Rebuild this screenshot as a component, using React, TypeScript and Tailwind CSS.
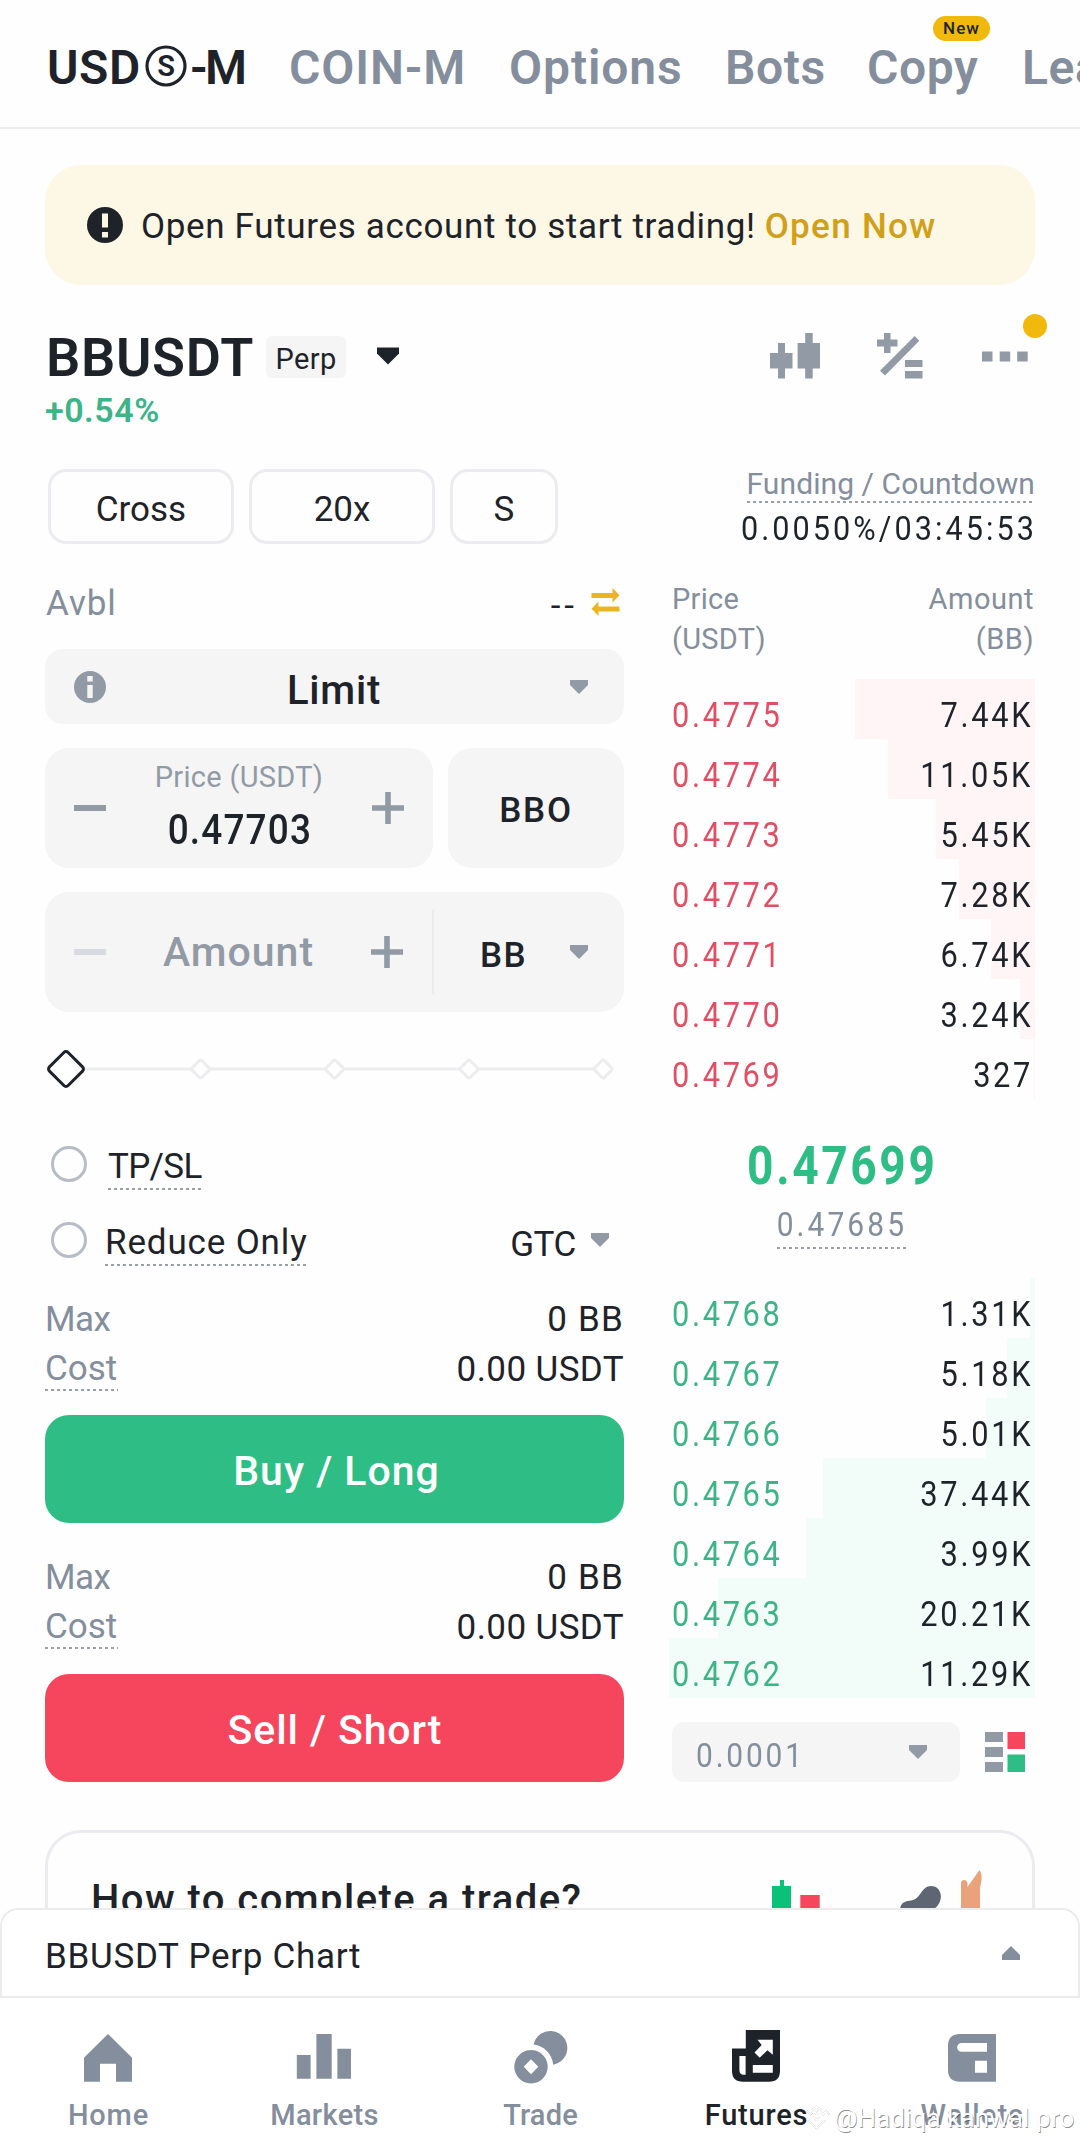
import React from "react";

type Level = { price: string; amount: string; depth: number };

const ASKS: Level[] = [
  { price: "0.4775", amount: "7.44K", depth: 180 },
  { price: "0.4774", amount: "11.05K", depth: 147 },
  { price: "0.4773", amount: "5.45K", depth: 99 },
  { price: "0.4772", amount: "7.28K", depth: 76 },
  { price: "0.4771", amount: "6.74K", depth: 44 },
  { price: "0.4770", amount: "3.24K", depth: 15 },
  { price: "0.4769", amount: "327", depth: 1 },
];

const BIDS: Level[] = [
  { price: "0.4768", amount: "1.31K", depth: 5 },
  { price: "0.4767", amount: "5.18K", depth: 28 },
  { price: "0.4766", amount: "5.01K", depth: 49 },
  { price: "0.4765", amount: "37.44K", depth: 212 },
  { price: "0.4764", amount: "3.99K", depth: 229 },
  { price: "0.4763", amount: "20.21K", depth: 317 },
  { price: "0.4762", amount: "11.29K", depth: 366 },
];

function Caret({ className = "" }: { className?: string }) {
  return (
    <svg viewBox="0 0 18 14" className={className} fill="currentColor">
      <path d="M0 0H18V5L9 14L0 5Z" />
    </svg>
  );
}

function Header() {
  return (
    <header className="grid h-[129px] shrink-0 grid-cols-[242px_220px_216px_142px_155px_auto] items-center overflow-hidden border-b-2 border-[#ededed] pt-[8px] pl-[47px] text-[48px] font-semibold leading-[60px] whitespace-nowrap text-[#848e9c]">
      <div className="flex items-center text-[#1e2329]">
        <span className="tracking-[0.6px]">USD</span>
        <svg viewBox="0 0 42 42" className="mb-[3px] ml-[4px] h-[42px] w-[42px]">
          <circle cx="21" cy="21" r="19" fill="none" stroke="currentColor" strokeWidth="3.2" />
          <text x="21" y="31.200" textAnchor="middle" fontSize="29" fontWeight="600" fill="currentColor">S</text>
        </svg>
        <span className="ml-[3px] tracking-[-2.6px]">-M</span>
      </div>
      <span className="tracking-[0.9px]">COIN-M</span>
      <span className="tracking-[0.9px]">Options</span>
      <span className="tracking-[0.6px]">Bots</span>
      <span className="relative tracking-[0.6px]">
        Copy
        <span className="absolute top-[-22px] left-[66px] flex h-[25px] w-[57px] items-center justify-center rounded-full bg-[#f0b90b] text-[17px] leading-none font-medium tracking-[1px] text-[#1e2329]">
          New
        </span>
      </span>
      <span className="tracking-[0.6px]">Lea</span>
    </header>
  );
}

function Banner() {
  return (
    <div className="mt-[36px] flex h-[120px] items-center rounded-[36px] bg-[#fdf7e6] pl-[42px] text-[35px] whitespace-nowrap">
      <svg viewBox="0 0 36 36" className="h-[36px] w-[36px]">
        <circle cx="18" cy="18" r="18" fill="#1e2329" />
        <path d="M15 6.500h6v14h-6zM15 25h6v5.500h-6z" fill="#fdf7e6" />
      </svg>
      <span className="ml-[18px] pt-[5px] tracking-[0.66px]">Open Futures account to start trading!</span>
      <span className="ml-[9px] pt-[5px] font-medium tracking-[1.3px] text-[#d0a01a]">Open Now</span>
    </div>
  );
}

function PairTitle() {
  return (
    <div className="mt-[42px] flex h-[106px] items-start justify-between">
      <div>
        <div className="flex h-[60px] items-center pl-[1px]">
          <span className="pt-[2px] text-[54px] leading-[60px] font-semibold tracking-[0.7px]">BBUSDT</span>
          <span className="ml-[12px] flex h-[42px] w-[80px] items-center justify-center rounded-[6px] bg-[#f5f5f5] pt-[5px] text-[29px] leading-none tracking-[0.4px]">
            Perp
          </span>
          <Caret className="mb-[3px] ml-[31px] h-[18px] w-[22px]" />
        </div>
        <div className="text-[34px] leading-[47px] font-semibold tracking-[0.5px] text-[#3bb588]">+0.54%</div>
      </div>
      <div className="relative flex h-[58px] items-center text-[#929aa5]">
        <svg viewBox="0 0 50 46" className="h-[46px] w-[50px]" fill="currentColor">
          <path d="M8 10h7v10h7.500v15.500H15v10H8v-10H0V20h8z" />
          <path d="M35.200 0h7.500v10H50v25.500h-7.300v10h-7.500v-10H27.600V10h7.600z" />
        </svg>
        <svg viewBox="0 0 46 46" className="ml-[57px] h-[46px] w-[46px]" fill="currentColor">
          <path d="M7 0h6.500v6.500H20.500v7H13.500V20H7v-6.500H0v-7h7z" />
          <path d="M37.700 3L42.300 7.700L8 42.500L3 37.700z" />
          <path d="M28 27h17.500v7H28zM28 38h17.500v7.500H28z" />
        </svg>
        <svg viewBox="0 0 46 11" className="mr-[7px] ml-[59px] h-[11px] w-[46px]" fill="currentColor">
          <path d="M0 0.500h10.500v10H0zM17.700 0.500h10.500v10H17.700zM35.200 0.500h10.500v10H35.200z" />
        </svg>
        <span className="absolute top-[-13px] right-[-12px] h-[24px] w-[24px] rounded-full bg-[#f0b90b]" />
      </div>
    </div>
  );
}

/** Label with the dotted rule that marks an explainable term. */
function Dotted({ children, className = "" }: { children: React.ReactNode; className?: string }) {
  return (
    <span className={"inline-flex flex-col " + className}>
      <span className="translate-y-px">{children}</span>
      <span className="h-[2px] w-full bg-[repeating-linear-gradient(90deg,#9aa0a6_0_3px,transparent_3px_6px)]" />
    </span>
  );
}

function MarginRow() {
  return (
    <div className="mt-[36px] flex h-[84px] items-start justify-between whitespace-nowrap">
      <div className="flex pl-[3px] text-[35px]">
        <div className="flex h-[75px] w-[186px] items-center justify-center rounded-[18px] border-[3px] border-[#ececf0] pt-[8px]">Cross</div>
        <div className="ml-[15px] flex h-[75px] w-[186px] items-center justify-center rounded-[18px] border-[3px] border-[#ececf0] pt-[8px]">20x</div>
        <div className="ml-[15px] flex h-[75px] w-[108px] items-center justify-center rounded-[18px] border-[3px] border-[#ececf0] pt-[8px]">S</div>
      </div>
      <div className="flex flex-col items-end">
        <Dotted className="gap-[4px] text-[30px] leading-[28px] tracking-[0.08px] text-[#848e9c]">Funding / Countdown</Dotted>
        <span className="mr-[-2px] origin-right scale-x-90 text-[34px] leading-[51px] tracking-[3.4px]">0.0050%/03:45:53</span>
      </div>
    </div>
  );
}

function Minus({ className = "" }: { className?: string }) {
  return <span className={"h-[6px] w-[32px] " + className} />;
}

function Plus() {
  return (
    <svg viewBox="0 0 32 32" className="h-[32px] w-[32px] text-[#929aa5]" fill="currentColor">
      <path d="M13.200 0h5.600v13.200H32v5.600H18.800V32h-5.600V18.800H0v-5.600h13.200z" />
    </svg>
  );
}

function Slider() {
  return (
    <svg viewBox="0 0 579 40" className="mt-[37px] h-[40px] w-[579px]" fill="#fff">
      <path d="M21 20H558" stroke="#ededf0" strokeWidth="3" />
      {[155.6, 289.6, 424, 558.2].map((x) => (
        <rect key={x} x={x - 6.8} y="13.200" width="13.600" height="13.600" rx="2" stroke="#ededf0" strokeWidth="3" transform={`rotate(45 ${x} 20)`} />
      ))}
      <rect x="7.800" y="6.800" width="26.400" height="26.400" rx="3" stroke="#1e2329" strokeWidth="3" transform="rotate(45 21 20)" />
    </svg>
  );
}

function Radio() {
  return <span className="mt-[2px] ml-[6px] h-[36px] w-[36px] rounded-full border-[3px] border-[#b7bdc6]" />;
}

function Totals() {
  return (
    <div className="text-[35px]">
      <div className="flex h-[50px] items-center justify-between pt-[4px]">
        <span className="tracking-[-0.5px] text-[#848e9c]">Max</span>
        <span className="tracking-[1.2px]">0 BB</span>
      </div>
      <div className="flex h-[50px] items-start justify-between">
        <Dotted className="mt-[4px] w-[73px] leading-[42px] text-[#848e9c]">Cost</Dotted>
        <span className="leading-[53px] tracking-[0.4px]">0.00 USDT</span>
      </div>
    </div>
  );
}

function OrderForm() {
  return (
    <section className="w-[579px] whitespace-nowrap">
      <div className="mt-[26px] flex h-[50px] items-center justify-between text-[35px]">
        <span className="pl-[1px] tracking-[0.9px] text-[#848e9c]">Avbl</span>
        <div className="flex items-center pr-[4px]">
          <span className="pt-[4px] tracking-[4px]">--</span>
          <svg viewBox="0 0 29 28" className="mb-[5px] ml-[13px] h-[28px] w-[29px] text-[#ebb61d]" fill="currentColor">
            <path d="M0.500 5h21V0l7 7.200l-7 7.300V10h-21z" />
            <path d="M28.500 18.500H7.500V13.500l-7 7.200l7 7.300v-4.500h21z" />
          </svg>
        </div>
      </div>

      <div className="mt-[20px] flex h-[75px] items-center justify-between rounded-[18px] bg-[#f5f5f5] pr-[36px] pl-[29px] text-[40px] font-medium">
        <svg viewBox="0 0 32 32" className="h-[32px] w-[32px]">
          <circle cx="16" cy="16" r="16" fill="#929aa5" />
          <path d="M13.300 5h5.400v5.500h-5.400zM13.300 14h5.400v13h-5.400z" fill="#f5f5f5" />
        </svg>
        <span className="pt-[8px] pr-[8px] tracking-[0.8px]">Limit</span>
        <Caret className="h-[14px] w-[18px] text-[#929aa5]" />
      </div>

      <div className="mt-[24px] flex gap-[15px]">
        <div className="flex h-[120px] w-[388px] items-center justify-between rounded-[24px] bg-[#f5f5f5] px-[29px]">
          <Minus className="bg-[#929aa5]" />
          <div className="flex flex-col items-center">
            <span className="text-[29px] leading-[42px] tracking-[0.3px] text-[#929aa5]">Price (USDT)</span>
            <span className="scale-x-[0.88] pl-[2px] text-[42px] leading-[63px] font-medium tracking-[1.3px]">0.47703</span>
          </div>
          <Plus />
        </div>
        <div className="flex h-[120px] w-[176px] items-center justify-center rounded-[24px] bg-[#f5f5f5] pt-[6px] text-[35px] font-medium tracking-[1.8px]">BBO</div>
      </div>

      <div className="mt-[24px] flex h-[120px] items-center rounded-[24px] bg-[#f5f5f5]">
        <div className="flex w-[387px] items-center justify-between px-[29px]">
          <Minus className="bg-[#d8dbdf]" />
          <span className="pt-[2px] text-[41px] font-medium tracking-[1px] text-[#929aa5]">Amount</span>
          <Plus />
        </div>
        <div className="h-[84px] w-[2px] bg-[#ebebee]" />
        <div className="flex flex-1 items-center justify-between pr-[36px] pl-[46px]">
          <span className="pt-[8px] text-[35px] font-medium tracking-[1.5px]">BB</span>
          <Caret className="h-[14px] w-[18px] text-[#929aa5]" />
        </div>
      </div>

      <Slider />

      <div className="mt-[55px] flex h-[46px] items-start text-[35px]">
        <Radio />
        <Dotted className="ml-[21px] leading-[44px] tracking-[-0.7px]">TP/SL</Dotted>
      </div>
      <div className="mt-[30px] flex h-[46px] items-start text-[35px]">
        <Radio />
        <Dotted className="ml-[18px] leading-[44px] tracking-[0.85px]">Reduce Only</Dotted>
        <div className="ml-auto flex items-center pr-[15px]">
          <span className="leading-[49px] tracking-[-0.4px]">GTC</span>
          <Caret className="mb-[9px] ml-[15px] h-[14px] w-[18px] text-[#929aa5]" />
        </div>
      </div>

      <div className="mt-[27px]">
        <Totals />
      </div>
      <button className="mt-[22px] block h-[108px] w-full rounded-[24px] bg-[#2ebd85] pt-[6px] pl-[4px] text-[41px] font-medium tracking-[1px] text-white">Buy / Long</button>
      <div className="mt-[28px]">
        <Totals />
      </div>
      <button className="mt-[23px] block h-[108px] w-full rounded-[24px] bg-[#f6465d] pt-[5px] pl-[1px] text-[41px] font-medium tracking-[0.9px] text-white">Sell / Short</button>
    </section>
  );
}

function Depth({ levels, priceClass, barClass }: { levels: Level[]; priceClass: string; barClass: string }) {
  return (
    <div>
      {levels.map((l) => (
        <div key={l.price} className="relative flex h-[60px] items-center justify-between pt-[14px] pr-[2px] pl-[3px] text-[35px] tracking-[3px]">
          <span className={"absolute inset-y-0 right-0 " + barClass} style={{ width: l.depth }} />
          <span className={"relative origin-left scale-x-[0.88] " + priceClass}>{l.price}</span>
          <span className="relative origin-right scale-x-[0.88]">{l.amount}</span>
        </div>
      ))}
    </div>
  );
}

function OrderBook() {
  return (
    <section className="w-[366px] whitespace-nowrap">
      <div className="mt-[26px] flex justify-between pr-[1px] pl-[3px] text-[29px] leading-[40px] text-[#848e9c]">
        <div className="tracking-[0.3px]">
          Price
          <br />
          (USDT)
        </div>
        <div className="text-right tracking-[0.5px]">
          Amount
          <br />
          (BB)
        </div>
      </div>
      <div className="mt-[20px]">
        <Depth levels={ASKS} priceClass="text-[#e04f63]" barClass="bg-[#fff5f6]" />
      </div>
      <div className="mt-[32px] flex flex-col items-center pr-[22px]">
        <span className="scale-x-[0.87] pl-[2px] text-[53px] leading-[71px] font-bold tracking-[3px] text-[#2ebd85]">0.47699</span>
        <Dotted className="w-[129px] items-center gap-[2px] text-[34px] leading-[43px] text-[#848e9c]">
          <span className="inline-block scale-x-[0.88] pl-[3px] tracking-[3.5px]">0.47685</span>
        </Dotted>
      </div>
      <div className="mt-[29px]">
        <Depth levels={BIDS} priceClass="text-[#3bb588]" barClass="bg-[#f2fcf8]" />
      </div>
      <div className="mt-[24px] flex items-center pl-[3px]">
        <div className="flex h-[60px] w-[288px] items-center justify-between rounded-[12px] bg-[#f5f5f5] pr-[33px] pl-[24px] text-[34px] text-[#848e9c]">
          <span className="origin-left scale-x-[0.88] pt-[7px] tracking-[3.2px]">0.0001</span>
          <Caret className="h-[14px] w-[18px] text-[#929aa5]" />
        </div>
        <svg viewBox="0 0 40 40" className="ml-[25px] h-[40px] w-[40px]">
          <path d="M0 0h18v10H0zM0 15h18v10H0zM0 30h18v10H0z" fill="#929aa5" />
          <path d="M22.500 0H40v17H22.500z" fill="#f6465d" />
          <path d="M22.500 22.500H40V40H22.500z" fill="#2ebd85" />
        </svg>
      </div>
    </section>
  );
}

function GuideCard() {
  return (
    <div className="mt-[48px] flex h-[200px] items-start justify-between rounded-[36px] border-[3px] border-[#ececf0] pr-[47px] pl-[43px]">
      <span className="pt-[43px] text-[40px] leading-[48px] font-medium tracking-[1.45px] whitespace-nowrap">How to complete a trade?</span>
      <svg viewBox="765 1870 220 60" className="mt-[37px] h-[60px] w-[220px]">
        <path d="M772 1886h8v-6h4v6h7v40h-19z" fill="#0ac17a" />
        <path d="M800.300 1895h19.400v30h-19.400z" fill="#f6465d" />
        <path d="M900 1909C901 1902 906 1901 911 1900.500C921 1899.500 921 1886 931 1886C942 1886 945 1901 934 1909Z" fill="#5e6673" />
        <path d="M961 1920V1883C961 1879 967 1879 967.500 1883V1887L979.500 1870C984 1877 980 1884 980 1890V1920Z" fill="#e9a27b" />
      </svg>
    </div>
  );
}

function ChartSheet() {
  return (
    <div className="flex h-[90px] shrink-0 items-center justify-between rounded-t-[18px] border-2 border-[#ececec] bg-white pr-[58px] pl-[43px]">
      <span className="pt-[9px] text-[35px] tracking-[0.7px]">BBUSDT Perp Chart</span>
      <Caret className="h-[14px] w-[18px] rotate-180 text-[#848e9c]" />
    </div>
  );
}

const NAV = [
  {
    label: "Home",
    text: "tracking-[0.8px]",
    icon: <path d="M30 6L54 29.700V53.700H38V35.700H22V53.700H6V29.700Z" />,
  },
  {
    label: "Markets",
    text: "tracking-[0.35px]",
    icon: <path d="M2.800 27h13.800v23.700H2.800zM22.400 6h15.300v44.700H22.400zM43.400 20.700H57v30H43.400z" />,
  },
  {
    label: "Trade",
    text: "tracking-[0.16px]",
    icon: (
      <>
        <path fillRule="evenodd" d="M21 22a16.700 16.700 0 1 0 .01 0zM21 31.200l7.300 7.500l-7.300 7.500l-7.300-7.500z" />
        <path d="M23.700 16.500A17 17 0 1 1 43.200 36.700A22.300 22.300 0 0 0 23.700 16.500z" />
      </>
    ),
  },
  {
    label: "Futures",
    text: "tracking-[0.8px] text-[#1e2329]",
    icon: (
      <>
        <path d="M19.800 2H54V42.700Q54 53.700 43 53.700H17Q6 53.700 6 42.700V20.500H19.800z" />
        <path d="M13.400 28h6.200v18.700h-2q-4.200 0-4.200-4.700zM26.800 37h20v7.700h-20zM31.500 11.700H46.800V26.700L41.500 22.300L33.700 29.700L28.500 24.400L35.700 17z" fill="#fff" />
      </>
    ),
  },
  {
    label: "Wallets",
    text: "tracking-[1.2px]",
    icon: <path fillRule="evenodd" d="M18 6H54V53.700H18Q6 53.700 6 41.700V18Q6 6 18 6zM19.500 15a4.350 4.350 0 0 0 0 8.700H45V15zM33 32.700v12h12v-12z" />,
  },
];

function BottomNav() {
  return (
    <nav className="relative flex h-[142px] shrink-0 bg-white pt-[30px] text-[#848e9c]">
      {NAV.map((n) => (
        <div key={n.label} className={"flex w-[216px] flex-col items-center text-[29px] font-medium " + n.text}>
          <svg viewBox="0 0 60 60" className="h-[60px] w-[60px]" fill="currentColor">
            {n.icon}
          </svg>
          <span className="mt-[7px] pl-[1px] leading-[40px]">{n.label}</span>
        </div>
      ))}
      <div className="absolute top-[102px] left-[806px] flex items-center whitespace-nowrap text-white">
        <svg viewBox="0 0 26 26" className="h-[26px] w-[26px] drop-shadow-[0.7px_0.7px_0.4px_rgba(0,0,0,0.45)]" fill="none" stroke="currentColor" strokeWidth="1.600">
          <path d="M6 5l4.500-3.500L15 5M1 6l3.500 3.500L7.500 6l3 3l3-3l3.500 3.500L20 6l3.500 3.500M2 15.500l8.500 8l8.500-8M7.500 12l3 3l3-3" />
        </svg>
        <span className="ml-[2px] text-[26px] leading-[36px] tracking-[0.1px] [text-shadow:0.8px_0.8px_0.6px_rgba(0,0,0,0.45)]">@Hadiqa kanwal pro</span>
      </div>
    </nav>
  );
}

export default function App() {
  return (
    <div className="flex h-[2140px] w-[1080px] flex-col overflow-hidden bg-[#fefefe] font-[Roboto,sans-serif] text-[#1e2329]">
      <Header />
      <main className="min-h-0 flex-1 overflow-hidden px-[45px]">
        <Banner />
        <PairTitle />
        <MarginRow />
        <div className="flex items-start justify-between">
          <OrderForm />
          <OrderBook />
        </div>
        <GuideCard />
      </main>
      <ChartSheet />
      <BottomNav />
    </div>
  );
}
